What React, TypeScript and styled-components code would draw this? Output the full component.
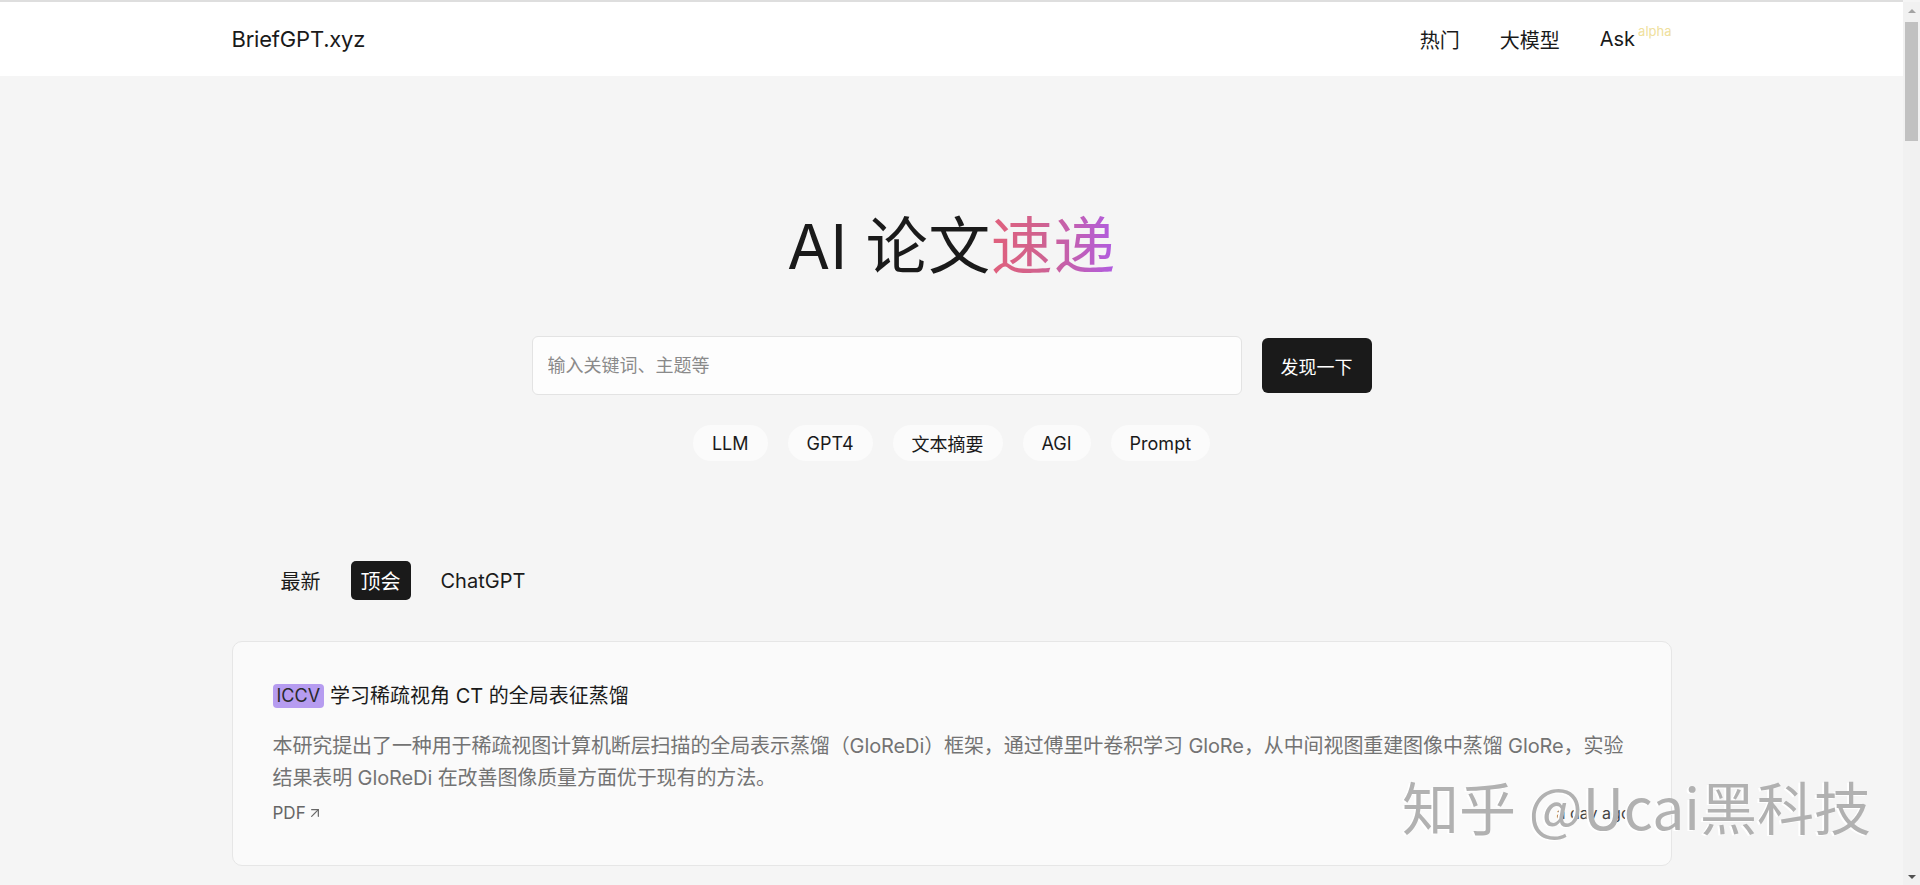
import React from "react";
import styled, { createGlobalStyle } from "styled-components";
import { ArrowUpRight } from "lucide-react";

const GlobalStyle = createGlobalStyle`
  html, body {
    margin: 0;
    padding: 0;
    background: #f5f5f5;
    font-family: Inter, "Noto Sans CJK SC", sans-serif;
    color: #1a1a1a;
  }
  body { padding-right: 17px; }
  * { box-sizing: border-box; }
`;

const Header = styled.header`
  background: #fff;
  border-top: 2px solid #dedede;
  height: 76px;
`;

const Container = styled.div`
  max-width: 1440px;
  margin: 0 auto;
`;

const HeaderInner = styled(Container)`
  height: 100%;
  display: flex;
  align-items: center;
  justify-content: space-between;
`;

const Brand = styled.a`
  font-size: 22px;
  color: #1a1a1a;
  text-decoration: none;
  letter-spacing: -0.2px;
`;

const Nav = styled.nav`
  display: flex;
  align-items: center;
  gap: 40px;
`;

const NavLink = styled.a`
  font-size: 20px;
  color: #1a1a1a;
  text-decoration: none;
`;

const Sup = styled.sup`
  font-size: 13px;
  color: #efe09c;
  margin-left: 3px;
  vertical-align: 10px;
  line-height: 0;
`;

const Hero = styled.section`
  display: flex;
  flex-direction: column;
  align-items: center;
  padding-top: 140px;
`;

const Title = styled.h1`
  margin: 0;
  font-size: 62px;
  font-weight: 400;
  line-height: 62px;
  letter-spacing: 0.5px;
`;

const Gradient = styled.span`
  background: linear-gradient(to right, #e0607c, #d0628f 40%, #b05ce2);
  -webkit-background-clip: text;
  background-clip: text;
  color: transparent;
`;

const SearchRow = styled.form`
  margin-top: 58px;
  display: flex;
  align-items: center;
  gap: 20px;
`;

const SearchInput = styled.input`
  width: 710px;
  height: 59px;
  padding: 0 15px;
  border: 1px solid #e3e3e3;
  border-radius: 6px;
  background: #fdfdfd;
  font-family: inherit;
  font-size: 18px;
  color: #1a1a1a;
  outline: none;
  &::placeholder { color: #8a8a8a; }
`;

const SearchButton = styled.button`
  height: 55px;
  padding: 0 19px;
  border: none;
  border-radius: 6px;
  background: #1a1a1a;
  color: #fff;
  font-family: inherit;
  font-size: 18px;
  cursor: pointer;
`;

const Tags = styled.div`
  margin-top: 30px;
  display: flex;
  gap: 20px;
`;

const Tag = styled.a`
  height: 36px;
  padding: 0 19px;
  display: flex;
  align-items: center;
  border-radius: 18px;
  background: #fbfbfb;
  font-size: 18px;
  color: #1a1a1a;
  text-decoration: none;
`;

const Tabs = styled.div`
  margin-top: 100px;
  padding-left: 39px;
  display: flex;
  align-items: center;
  gap: 20px;
`;

const Tab = styled.button<{ $active?: boolean }>`
  height: 39px;
  padding: 0 10px;
  border: none;
  border-radius: 5px;
  background: ${(p) => (p.$active ? "#1a1a1a" : "transparent")};
  color: ${(p) => (p.$active ? "#fff" : "#1a1a1a")};
  font-family: inherit;
  font-size: 20px;
  cursor: pointer;
`;

const List = styled.div`
  margin-top: 41px;
  display: flex;
  flex-direction: column;
  gap: 20px;
  padding-bottom: 60px;
`;

const Card = styled.article`
  background: #fafafa;
  border: 1px solid #e6e6e6;
  border-radius: 10px;
  padding: 40px;
`;

const CardTitle = styled.h3`
  margin: 0;
  display: flex;
  align-items: center;
  gap: 6px;
  font-size: 20px;
  font-weight: 400;
  line-height: 28px;
`;

const Badge = styled.span<{ $color: string }>`
  height: 24px;
  padding: 0 4px;
  display: inline-flex;
  align-items: center;
  border-radius: 4px;
  background: ${(p) => p.$color};
  color: #2a2a2a;
  font-size: 18px;
`;

const Summary = styled.p`
  margin: 20px 0 0;
  font-size: 20px;
  line-height: 32px;
  letter-spacing: -0.1px;
  color: #737373;
`;

const CardFooter = styled.div`
  margin-top: 7px;
  height: 24px;
  display: flex;
  align-items: center;
  justify-content: space-between;
`;

const PdfLink = styled.a`
  display: inline-flex;
  align-items: center;
  gap: 1px;
  font-size: 17px;
  color: #666;
  text-decoration: none;
`;

const Time = styled.span`
  font-size: 16px;
  color: #444;
`;

const Watermark = styled.div`
  position: fixed;
  left: 1402px;
  top: 772px;
  font-family: "Noto Sans CJK SC", sans-serif;
  font-size: 57px;
  line-height: 66px;
  color: #b1b1b1;
  text-shadow: -2px 1px 0 #fff;
  pointer-events: none;
  white-space: nowrap;
`;

const ScrollTrack = styled.div`
  position: fixed;
  top: 2px;
  right: 0;
  bottom: 0;
  width: 17px;
  background: #f1f1f1;
  display: flex;
  flex-direction: column;
  align-items: center;
`;

const ScrollArrow = styled.div<{ $down?: boolean }>`
  width: 17px;
  height: 17px;
  display: flex;
  align-items: center;
  justify-content: center;
  margin-top: ${(p) => (p.$down ? "auto" : "0")};
  &::after {
    content: "";
    border-left: 4px solid transparent;
    border-right: 4px solid transparent;
    ${(p) =>
      p.$down ? "border-top: 4px solid #505050;" : "border-bottom: 4px solid #a3a3a3;"}
  }
`;

const ScrollThumb = styled.div`
  width: 13px;
  height: 119px;
  margin-top: 3px;
  background: #c1c1c1;
`;

const papers = [
  {
    venue: "ICCV",
    color: "#b69cf0",
    title: "学习稀疏视角 CT 的全局表征蒸馏",
    summary:
      "本研究提出了一种用于稀疏视图计算机断层扫描的全局表示蒸馏（GloReDi）框架，通过傅里叶卷积学习 GloRe，从中间视图重建图像中蒸馏 GloRe，实验结果表明 GloReDi 在改善图像质量方面优于现有的方法。",
    time: "a day ago",
  },
  {
    venue: "ICCV",
    color: "#b69cf0",
    title: "面向开放词汇目标检测的区域提示学习",
    summary:
      "本文提出一种区域级提示学习方法，将视觉语言模型的知识迁移到开放词汇目标检测任务中，在多个基准数据集上取得了显著的性能提升。",
    time: "a day ago",
  },
  {
    venue: "ACL",
    color: "#f5c26b",
    title: "大语言模型中的上下文学习机制分析",
    summary:
      "本研究从信息流的角度分析了大语言模型的上下文学习能力，发现标签词在浅层聚合信息并在深层引导预测，据此提出了提升上下文学习效果的方法。",
    time: "2 days ago",
  },
  {
    venue: "CVPR",
    color: "#8fd3b0",
    title: "基于扩散模型的高保真图像编辑",
    summary:
      "本文提出了一种无需训练的图像编辑框架，利用扩散模型的注意力图实现对图像局部区域的精确控制，同时保持未编辑区域的一致性。",
    time: "3 days ago",
  },
];

export default function App() {
  return (
    <>
      <GlobalStyle />
      <Header>
        <HeaderInner>
          <Brand href="#">BriefGPT.xyz</Brand>
          <Nav>
            <NavLink href="#">热门</NavLink>
            <NavLink href="#">大模型</NavLink>
            <NavLink href="#">
              Ask<Sup>alpha</Sup>
            </NavLink>
          </Nav>
        </HeaderInner>
      </Header>
      <Container>
        <Hero>
          <Title>
            AI 论文<Gradient>速递</Gradient>
          </Title>
          <SearchRow onSubmit={(e) => e.preventDefault()}>
            <SearchInput placeholder="输入关键词、主题等" />
            <SearchButton type="submit">发现一下</SearchButton>
          </SearchRow>
          <Tags>
            {["LLM", "GPT4", "文本摘要", "AGI", "Prompt"].map((t) => (
              <Tag key={t} href="#">
                {t}
              </Tag>
            ))}
          </Tags>
        </Hero>
        <Tabs>
          <Tab>最新</Tab>
          <Tab $active>顶会</Tab>
          <Tab>ChatGPT</Tab>
        </Tabs>
        <List>
          {papers.map((p, i) => (
            <Card key={i}>
              <CardTitle>
                <Badge $color={p.color}>{p.venue}</Badge>
                {p.title}
              </CardTitle>
              <Summary>{p.summary}</Summary>
              <CardFooter>
                <PdfLink href="#">
                  PDF
                  <ArrowUpRight size={16} strokeWidth={1.8} />
                </PdfLink>
                <Time>{p.time}</Time>
              </CardFooter>
            </Card>
          ))}
        </List>
      </Container>
      <Watermark>知乎 @Ucai黑科技</Watermark>
      <ScrollTrack>
        <ScrollArrow />
        <ScrollThumb />
        <ScrollArrow $down />
      </ScrollTrack>
    </>
  );
}
